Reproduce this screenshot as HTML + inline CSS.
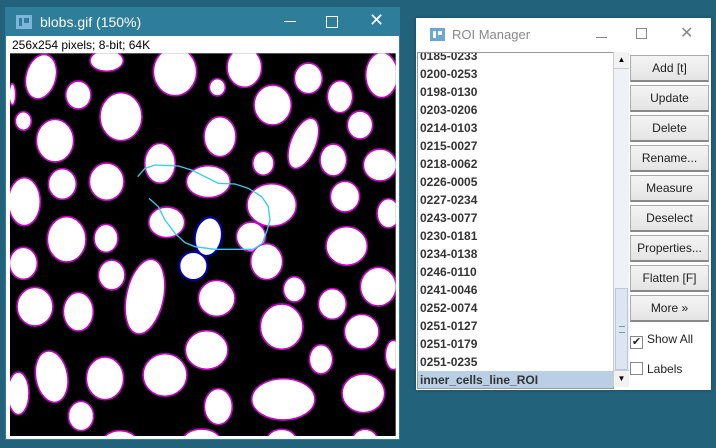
<!DOCTYPE html>
<html><head><style>
body{margin:0;width:716px;height:448px;background:#22637b;position:relative;overflow:hidden;font-family:"Liberation Sans",sans-serif}
.w1{position:absolute;left:5px;top:7px;width:395px;height:433px;background:#fff;border:1px solid #2e7d9a;box-sizing:border-box}
.t1{position:absolute;left:0;top:0;width:100%;height:28px;background:#2e7d9a;color:#fff;font-size:14px}
.info{position:absolute;left:6px;top:30px;font-size:12px;color:#000}
.w2{position:absolute;left:416px;top:18px;width:295px;height:372px;background:#fff;box-shadow:0 0 4px rgba(0,0,0,.3)}
.list{position:absolute;left:1px;top:34px;width:195px;height:335px;border:1px solid #999;overflow:hidden;background:#fff}
.it{height:18px;line-height:18px;font-size:12px;font-weight:bold;color:#333;padding-left:2px}
.sb{position:absolute;left:197px;top:34px;width:15px;height:335px;background:#eef2f7;border-left:1px solid #ccc}
.btn{position:absolute;left:214px;width:79px;height:27px;background:linear-gradient(#f4f4f4,#e4e4e4);border:1px solid #aaa;border-bottom:2px solid #888;box-sizing:border-box;text-align:center;line-height:25px;font-size:12px;color:#222}
.cb{position:absolute;left:214px;font-size:12px;color:#222}
.cb span{display:inline-block;width:11px;height:11px;border:1px solid #888;vertical-align:-2px;margin-right:4px;font-size:11px;line-height:11px;text-align:center}
</style></head><body>
<div class="w1">
 <div class="t1">
  <svg style="position:absolute;left:10px;top:7px" width="16" height="14"><rect x="0" y="0" width="16" height="14" fill="#7fb3d9"/><rect x="3" y="3" width="3" height="8" fill="#2e7d9a"/><rect x="8" y="3" width="5" height="5" fill="#2e7d9a"/></svg>
  <span style="position:absolute;left:34px;top:6px">blobs.gif (150%)</span>
  <span style="position:absolute;left:278px;top:13px;width:12px;height:1px;background:#fff"></span>
  <span style="position:absolute;left:320px;top:8px;width:10px;height:10px;border:1px solid #fff"></span>
  <span style="position:absolute;left:363px;top:2px;font-size:18px">✕</span>
 </div>
 <div class="info">256x254 pixels; 8-bit; 64K</div>
</div>
<svg style="position:absolute;left:5px;top:50px" width="395" height="395" viewBox="0 0 1185 1185">
<defs><clipPath id="c"><rect x="15" y="10" width="1157" height="1148"/></clipPath></defs>
<rect x="15" y="10" width="1157" height="1148" fill="#000"/>
<g clip-path="url(#c)" fill="#fff" stroke="#c800c8" stroke-width="5">
<ellipse cx="108" cy="80" rx="45" ry="68" transform="rotate(15 108 80)"/>
<ellipse cx="305" cy="32" rx="50" ry="32"/>
<ellipse cx="510" cy="65" rx="65" ry="72"/>
<ellipse cx="718" cy="52" rx="52" ry="60"/>
<ellipse cx="637" cy="112" rx="24" ry="26"/>
<ellipse cx="220" cy="135" rx="38" ry="42"/>
<ellipse cx="910" cy="85" rx="42" ry="46"/>
<ellipse cx="1130" cy="75" rx="48" ry="68"/>
<ellipse cx="1005" cy="140" rx="38" ry="48"/>
<ellipse cx="348" cy="200" rx="63" ry="72"/>
<ellipse cx="803" cy="165" rx="56" ry="60"/>
<ellipse cx="55" cy="213" rx="24" ry="28"/>
<ellipse cx="150" cy="272" rx="56" ry="64"/>
<ellipse cx="645" cy="260" rx="48" ry="60"/>
<ellipse cx="1065" cy="225" rx="38" ry="42"/>
<ellipse cx="895" cy="280" rx="38" ry="80" transform="rotate(22 895 280)"/>
<ellipse cx="22" cy="133" rx="10" ry="32"/>
<ellipse cx="465" cy="340" rx="46" ry="60"/>
<ellipse cx="775" cy="340" rx="32" ry="36"/>
<ellipse cx="985" cy="330" rx="40" ry="48"/>
<ellipse cx="1125" cy="345" rx="50" ry="48"/>
<ellipse cx="172" cy="402" rx="42" ry="46"/>
<ellipse cx="305" cy="395" rx="52" ry="56"/>
<ellipse cx="610" cy="395" rx="66" ry="48"/>
<ellipse cx="58" cy="455" rx="48" ry="72"/>
<ellipse cx="800" cy="465" rx="74" ry="64"/>
<ellipse cx="1020" cy="440" rx="44" ry="46"/>
<ellipse cx="1150" cy="490" rx="34" ry="44"/>
<ellipse cx="485" cy="517" rx="54" ry="46"/>
<ellipse cx="185" cy="568" rx="58" ry="68"/>
<ellipse cx="303" cy="565" rx="36" ry="42"/>
<ellipse cx="738" cy="560" rx="44" ry="44"/>
<ellipse cx="785" cy="635" rx="48" ry="54"/>
<ellipse cx="1025" cy="588" rx="62" ry="58"/>
<ellipse cx="55" cy="640" rx="42" ry="48"/>
<ellipse cx="320" cy="675" rx="40" ry="45"/>
<ellipse cx="420" cy="740" rx="56" ry="114" transform="rotate(12 420 740)"/>
<ellipse cx="635" cy="745" rx="55" ry="54"/>
<ellipse cx="868" cy="718" rx="33" ry="38"/>
<ellipse cx="1120" cy="710" rx="54" ry="58"/>
<ellipse cx="90" cy="770" rx="54" ry="58"/>
<ellipse cx="220" cy="785" rx="45" ry="58"/>
<ellipse cx="982" cy="762" rx="42" ry="46"/>
<ellipse cx="830" cy="830" rx="64" ry="68"/>
<ellipse cx="1070" cy="845" rx="52" ry="52"/>
<ellipse cx="605" cy="900" rx="64" ry="58"/>
<ellipse cx="140" cy="980" rx="48" ry="78" transform="rotate(-10 140 980)"/>
<ellipse cx="300" cy="985" rx="56" ry="64"/>
<ellipse cx="480" cy="975" rx="66" ry="64"/>
<ellipse cx="948" cy="928" rx="35" ry="44"/>
<ellipse cx="1165" cy="915" rx="24" ry="44"/>
<ellipse cx="40" cy="1030" rx="32" ry="64"/>
<ellipse cx="640" cy="1070" rx="42" ry="54"/>
<ellipse cx="835" cy="1048" rx="95" ry="62"/>
<ellipse cx="1075" cy="1030" rx="64" ry="58"/>
<ellipse cx="228" cy="1098" rx="38" ry="44"/>
<ellipse cx="590" cy="1175" rx="58" ry="38"/>
<ellipse cx="345" cy="1170" rx="48" ry="28"/>
<ellipse cx="830" cy="1170" rx="44" ry="32"/>
<ellipse cx="1080" cy="1170" rx="38" ry="32"/>
<g stroke="#0000c0" stroke-width="6">
<ellipse cx="610" cy="560" rx="40" ry="58" transform="rotate(10 610 560)"/>
<ellipse cx="565" cy="648" rx="42" ry="42"/>
<ellipse cx="610" cy="560" rx="36" ry="54" transform="rotate(10 610 560)" stroke="none"/>
</g>
</g>
<path d="M398,380 L420,355 450,345 520,348 560,360 600,380 640,400 690,402 730,415 770,440 790,470 795,510 785,545 772,580 745,598 630,598 570,590 540,578 510,550 480,510 460,470 432,445" fill="none" stroke="#30d0e8" stroke-width="4"/>
</svg>
<div class="w2">
 <svg style="position:absolute;left:14px;top:10px" width="15" height="13"><rect width="15" height="13" fill="#6aa6d6"/><rect x="3" y="3" width="3" height="7" fill="#fff"/><rect x="8" y="3" width="4" height="4" fill="#fff"/></svg>
 <span style="position:absolute;left:36px;top:9px;font-size:13px;color:#888">ROI Manager</span>
 <span style="position:absolute;left:180px;top:19px;width:11px;height:1px;background:#888"></span>
 <span style="position:absolute;left:220px;top:10px;width:9px;height:9px;border:1px solid #888"></span>
 <span style="position:absolute;left:264px;top:5px;font-size:16px;color:#888">✕</span>
 <div class="list"><div style="margin-top:-6px">
  <div class="it">0185-0233</div><div class="it">0200-0253</div><div class="it">0198-0130</div><div class="it">0203-0206</div><div class="it">0214-0103</div><div class="it">0215-0027</div><div class="it">0218-0062</div><div class="it">0226-0005</div><div class="it">0227-0234</div><div class="it">0243-0077</div><div class="it">0230-0181</div><div class="it">0234-0138</div><div class="it">0246-0110</div><div class="it">0241-0046</div><div class="it">0252-0074</div><div class="it">0251-0127</div><div class="it">0251-0179</div><div class="it">0251-0235</div><div class="it" style="background:#b8cfe6">inner_cells_line_ROI</div>
 </div></div>
 <div class="sb">
  <div style="position:absolute;left:0;top:0;width:15px;height:16px;background:#f2f2f2;border-bottom:1px solid #ccc;text-align:center;font-size:8px;line-height:16px">▲</div>
  <div style="position:absolute;left:1px;top:236px;width:13px;height:82px;background:#dbe6f2;border:1px solid #b6c8dc;box-sizing:border-box"><div style="position:absolute;left:3px;top:37px;width:6px;height:5px;border-top:1px solid #7895b5;border-bottom:1px solid #7895b5"></div></div>
  <div style="position:absolute;left:0;bottom:0;width:15px;height:16px;background:#f2f2f2;border-top:1px solid #ccc;text-align:center;font-size:8px;line-height:16px">▼</div>
 </div>
 <div class="btn" style="top:37px">Add [t]</div>
 <div class="btn" style="top:67px">Update</div>
 <div class="btn" style="top:97px">Delete</div>
 <div class="btn" style="top:127px">Rename...</div>
 <div class="btn" style="top:157px">Measure</div>
 <div class="btn" style="top:187px">Deselect</div>
 <div class="btn" style="top:217px">Properties...</div>
 <div class="btn" style="top:247px">Flatten [F]</div>
 <div class="btn" style="top:277px">More »</div>
 <div class="cb" style="top:314px"><span>✔</span>Show All</div>
 <div class="cb" style="top:344px"><span></span>Labels</div>
</div>
</body></html>
